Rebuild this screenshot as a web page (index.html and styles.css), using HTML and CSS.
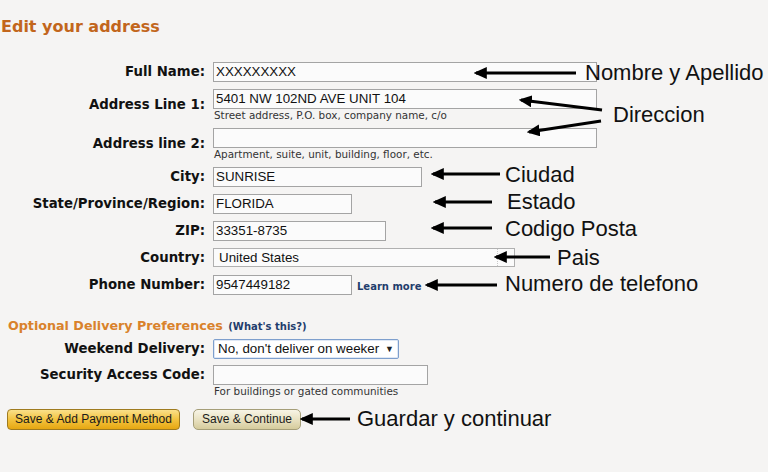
FILE: index.html
```html
<!DOCTYPE html>
<html lang="en">
<head>
<meta charset="utf-8">
<title>Edit your address</title>
<link rel="stylesheet" href="styles.css">
</head>
<body>
<div class="page">
  <h1 class="title">Edit your address</h1>

  <div class="form">
    <div class="row">
      <span class="label">Full Name:</span>
      <div class="field"><div class="box w-full">XXXXXXXXX</div></div>
    </div>
    <div class="row center">
      <span class="label">Address Line 1:</span>
      <div class="field">
        <div class="box w-full">5401 NW 102ND AVE UNIT 104</div>
        <div class="hint">Street address, P.O. box, company name, c/o</div>
      </div>
    </div>
    <div class="row center">
      <span class="label">Address line 2:</span>
      <div class="field">
        <div class="box w-full"></div>
        <div class="hint">Apartment, suite, unit, building, floor, etc.</div>
      </div>
    </div>
    <div class="row">
      <span class="label">City:</span>
      <div class="field"><div class="box w-city">SUNRISE</div></div>
    </div>
    <div class="row">
      <span class="label">State/Province/Region:</span>
      <div class="field"><div class="box w-state">FLORIDA</div></div>
    </div>
    <div class="row">
      <span class="label">ZIP:</span>
      <div class="field"><div class="box w-zip">33351-8735</div></div>
    </div>
    <div class="row">
      <span class="label">Country:</span>
      <div class="field"><div class="box select w-country">United States<span class="sel-btn"></span></div></div>
    </div>
    <div class="row">
      <span class="label">Phone Number:</span>
      <div class="field inline">
        <div class="box w-state">9547449182</div>
        <a class="small-link learn">Learn more</a>
      </div>
    </div>
  </div>

  <div class="optional">
    <h2 class="opt-title">Optional Delivery Preferences <a class="small-link">(What's this?)</a></h2>
    <div class="form opt-form">
      <div class="row">
        <span class="label">Weekend Delivery:</span>
        <div class="field"><div class="box dropdown w-weekend"><span class="dd-text">No, don't deliver on weeker</span><span class="dd-arrow">▼</span></div></div>
      </div>
      <div class="row">
        <span class="label">Security Access Code:</span>
        <div class="field">
          <div class="box w-code"></div>
          <div class="hint">For buildings or gated communities</div>
        </div>
      </div>
    </div>
  </div>

  <div class="buttons">
    <button class="btn btn-gold">Save &amp; Add Payment Method</button>
    <button class="btn btn-tan">Save &amp; Continue</button>
  </div>
</div>

<div class="notes">
  <svg class="arrows" width="768" height="472" viewBox="0 0 768 472">
    <defs>
      <marker id="ah" markerWidth="4.4" markerHeight="4" refX="3.6" refY="2" orient="auto" markerUnits="strokeWidth">
        <path d="M0,0 L4.4,2 L0,4 Z" fill="#000"/>
      </marker>
    </defs>
    <g stroke="#000" stroke-width="3" fill="none" marker-end="url(#ah)">
      <line x1="576" y1="73" x2="476" y2="73"/>
      <line x1="602" y1="110" x2="521" y2="100"/>
      <line x1="601" y1="121" x2="529" y2="132"/>
      <line x1="500" y1="174" x2="433" y2="174"/>
      <line x1="492" y1="202" x2="435" y2="202"/>
      <line x1="492" y1="228" x2="433" y2="228"/>
      <line x1="550" y1="257" x2="496" y2="257"/>
      <line x1="497" y1="285" x2="427" y2="285"/>
      <line x1="350" y1="419" x2="302" y2="419"/>
    </g>
  </svg>
  <span class="note n-nombre">Nombre y Apellido</span>
  <span class="note n-dir">Direccion</span>
  <span class="note n-ciudad">Ciudad</span>
  <span class="note n-estado">Estado</span>
  <span class="note n-codigo">Codigo Posta</span>
  <span class="note n-pais">Pais</span>
  <span class="note n-numero">Numero de telefono</span>
  <span class="note n-guardar">Guardar y continuar</span>
</div>
</body>
</html>
```

FILE: styles.css
```css
html, body {
  margin: 0;
  padding: 0;
}
body {
  width: 768px;
  height: 472px;
  background: #f5f4f3;
  font-family: "DejaVu Sans", Verdana, sans-serif;
  color: #111;
  position: relative;
  overflow: hidden;
}
.page {
  padding: 17px 0 0 0;
}
.title {
  margin: 0 0 0 1px;
  font-size: 16px;
  line-height: 20px;
  font-weight: bold;
  color: #c2661c;
}
.form {
  margin-top: 25px;
  display: flex;
  flex-direction: column;
  gap: 7px;
}
.row {
  display: grid;
  grid-template-columns: 205px auto;
  column-gap: 8px;
  align-items: start;
}
.row.center {
  align-items: center;
}
.label {
  text-align: right;
  font-weight: bold;
  font-size: 13.3px;
  line-height: 20px;
  white-space: nowrap;
}
.field {
  display: flex;
  flex-direction: column;
  align-items: flex-start;
}
.field.inline {
  flex-direction: row;
  align-items: center;
}
.box {
  box-sizing: border-box;
  height: 20px;
  border: 1px solid #a4a4a4;
  background: #fbfbfb;
  font-family: "Liberation Sans", Arial, sans-serif;
  font-size: 13.33px;
  line-height: 18px;
  padding: 0 2px;
  color: #111;
  white-space: nowrap;
  overflow: hidden;
}
.w-full { width: 384px; }
.w-city { width: 209px; }
.w-state { width: 139px; }
.w-zip { width: 173px; }
.w-code { width: 215px; }
.select {
  position: relative;
  height: 19px;
  line-height: 17px;
  padding-left: 5px;
}
.w-country { width: 302px; border-color: #b0b0b0; }
.sel-btn {
  position: absolute;
  right: 0;
  top: 0;
  bottom: 0;
  width: 16px;
  border-left: 1px dotted #c8c8c8;
}
.hint {
  font-size: 10.4px;
  line-height: 12px;
  color: #333;
  padding-left: 1px;
  white-space: nowrap;
}
.small-link {
  font-weight: bold;
  font-size: 10px;
  color: #1f3d6c;
  text-decoration: none;
}
.learn {
  margin-left: 5px;
  margin-top: 2px;
}
.optional {
  margin-top: 24px;
}
.opt-title {
  margin: 0 0 0 8px;
  font-size: 12.7px;
  line-height: 14px;
  font-weight: bold;
  color: #d9822b;
}
.opt-title .small-link {
  margin-left: 1px;
}
.opt-form {
  margin-top: 5px;
  gap: 6px;
}
.dropdown {
  display: flex;
  align-items: center;
  gap: 6px;
  border: 1px solid #7e9fcd;
  border-radius: 2px;
  background: #fff;
  padding: 0 4px 0 4px;
  box-shadow: inset 0 0 0 1px #dfe8f5;
}
.w-weekend { width: 186px; }
.dd-text {
  white-space: nowrap;
}
.dd-arrow {
  font-size: 9px;
  color: #222;
}
.buttons {
  margin-top: 12px;
  display: flex;
  gap: 13px;
  padding-left: 7px;
}
.btn {
  box-sizing: border-box;
  height: 21px;
  font-family: "Liberation Sans", Arial, sans-serif;
  font-size: 12px;
  line-height: 19px;
  padding: 0;
  color: #1a1a1a;
  border-radius: 4px;
  cursor: pointer;
}
.btn-gold {
  width: 173px;
  border: 1px solid #9f7b1f;
  background: linear-gradient(#fae08a, #f3c33f 50%, #e6a712);
}
.btn-tan {
  width: 108px;
  border: 1px solid #a59e78;
  border-radius: 5px;
  background: linear-gradient(#f7f4e6, #e9e2c2 50%, #d5cb9c);
}
.notes {
  position: absolute;
  left: 0;
  top: 0;
  width: 768px;
  height: 472px;
  pointer-events: none;
}
.arrows {
  position: absolute;
  left: 0;
  top: 0;
}
.note {
  position: absolute;
  font-family: "Liberation Sans", Arial, sans-serif;
  font-size: 22px;
  line-height: 26px;
  color: #111;
  white-space: nowrap;
}
.n-nombre { left: 585px; top: 60px; }
.n-dir { left: 613px; top: 102px; }
.n-ciudad { left: 505px; top: 162px; }
.n-estado { left: 507px; top: 189px; }
.n-codigo { left: 505px; top: 216px; }
.n-pais { left: 557px; top: 245px; }
.n-numero { left: 505px; top: 271px; }
.n-guardar { left: 357px; top: 406px; }
```
